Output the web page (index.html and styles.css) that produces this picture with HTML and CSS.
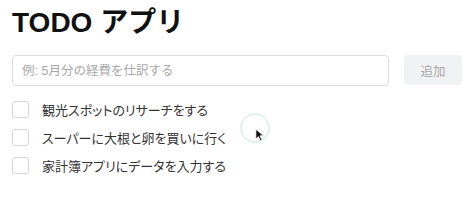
FILE: index.html
```html
<!DOCTYPE html>
<html lang="ja">
<head>
    <meta charset="UTF-8">
    <meta name="viewport" content="width=device-width, initial-scale=1.0">
    <title>TODO アプリ</title>
    <link rel="stylesheet" href="styles.css">
</head>
<body>
    <div class="app">
        <h1>TODO アプリ</h1>
        <form class="todo-form">
            <input type="text" class="todo-input" placeholder="例: 5月分の経費を仕訳する">
            <button type="submit" class="add-btn" disabled>追加</button>
        </form>
        <ul class="todo-list">
            <li><span class="check"></span>観光スポットのリサーチをする</li>
            <li><span class="check"></span>スーパーに大根と卵を買いに行く</li>
            <li><span class="check"></span>家計簿アプリにデータを入力する</li>
        </ul>
    </div>

    <!-- mouse pointer captured in the screenshot -->
    <div class="pointer">
        <div class="ring"></div>
        <svg class="arrow" viewBox="0 0 12 16">
            <path d="M1 1 L1 13 L4 10 L6.5 15 L8.5 14 L6 9 L10.5 9 Z" fill="#111" stroke="#fff" stroke-width="1"/>
        </svg>
    </div>
</body>
</html>
```

FILE: styles.css
```css
* {
    margin: 0;
    padding: 0;
    box-sizing: border-box;
    font-family: "Liberation Sans", "Noto Sans CJK JP", sans-serif;
}

body {
    background: #fff;
    color: #222;
}

.app {
    padding: 5px 12px 12px;
}

h1 {
    font-size: 28px;
    font-weight: 700;
    color: #111;
    line-height: 36px;
    margin-bottom: 14px;
}

.todo-form {
    display: flex;
    gap: 15px;
    margin-bottom: 9px;
}

.todo-input {
    flex: 1;
    height: 31px;
    border: 1px solid #dcdcdc;
    border-radius: 4px;
    padding: 0 9px;
    font-size: 12.5px;
    color: #333;
    outline: none;
}

.todo-input::placeholder {
    color: #a8a8a8;
}

.add-btn {
    width: 58px;
    height: 30px;
    border: none;
    border-radius: 4px;
    background: #f1f2f3;
    color: #a8a8a8;
    font-size: 12.5px;
}

.todo-list {
    list-style: none;
}

.todo-list li {
    display: flex;
    align-items: center;
    gap: 13px;
    height: 28px;
    font-size: 13px;
    font-feature-settings: "palt";
    color: #333;
}

.check {
    width: 17px;
    height: 17px;
    border: 1px solid #d4d4d4;
    border-radius: 3px;
    flex-shrink: 0;
}

.pointer {
    position: absolute;
    left: 240px;
    top: 113px;
    width: 30px;
    height: 30px;
}

.pointer .ring {
    width: 30px;
    height: 30px;
    border: 2px solid #dff3ec;
    border-radius: 50%;
}

.pointer .arrow {
    position: absolute;
    left: 15px;
    top: 15px;
    width: 10px;
    height: 14px;
}
```
